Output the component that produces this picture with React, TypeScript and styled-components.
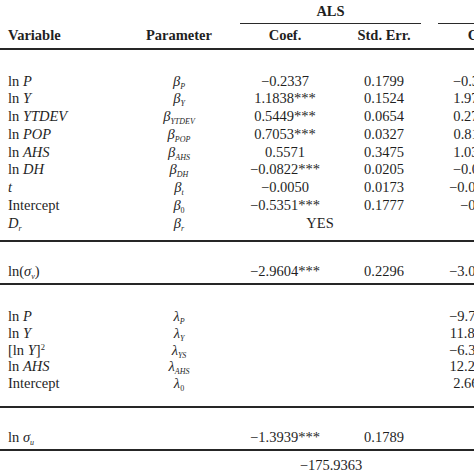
import React from 'react'
import styled, { createGlobalStyle } from 'styled-components'

const GlobalStyle = createGlobalStyle`
  html, body {
    margin: 0;
    padding: 0;
    background: #fff;
  }
  body {
    width: 474px;
    height: 474px;
    overflow: hidden;
  }
`

const Page = styled.div`
  width: 474px;
  height: 474px;
  overflow: hidden;
  background: #fff;
`

const Table = styled.table`
  width: 800px;
  table-layout: fixed;
  border-collapse: separate;
  border-spacing: 0;
  font-family: 'Liberation Serif', 'Times New Roman', serif;
  font-size: 14.5px;
  color: #1f1f1f;
  td, th {
    padding: 0;
  }
`

const GroupCell = styled.th`
  vertical-align: top;
  font-weight: 700;
`

const GroupLabel = styled.div`
  margin: 0 5px 0 12px;
  line-height: 23px;
  border-bottom: 1.5px solid #2a2a2a;
  text-align: center;
`

const HeadRow = styled.tr`
  height: 23.5px;
`

const HeadCell = styled.th<{ $left?: boolean }>`
  font-weight: 700;
  line-height: 23.5px;
  text-align: ${p => (p.$left ? 'left' : 'center')};
  padding-left: ${p => (p.$left ? '8px' : '0')} !important;
`

const Spacer = styled.tr<{ $h: number }>`
  height: ${p => p.$h}px;
  td {
    height: ${p => p.$h}px;
  }
`

const Rule = styled.tr`
  td {
    height: 2px;
    background: #262626;
  }
`

const Row = styled.tr<{ $h: number }>`
  td {
    height: ${p => p.$h}px;
    line-height: ${p => p.$h}px;
    white-space: nowrap;
  }
`

const VarCell = styled.td`
  text-align: left;
  padding-left: 8px !important;
`

const Cell = styled.td<{ $shift?: number }>`
  text-align: center;
  padding-left: ${p => (p.$shift && p.$shift > 0 ? p.$shift * 2 : 0)}px !important;
  padding-right: ${p => (p.$shift && p.$shift < 0 ? -p.$shift * 2 : 0)}px !important;
`

const Sym = styled.span`
  font-style: italic;
`

const Sub = styled.sub<{ $upright?: boolean }>`
  font-size: 8px;
  font-style: ${p => (p.$upright ? 'normal' : 'italic')};
  vertical-align: -3px;
  line-height: 0;
`

const Sup = styled.sup`
  font-size: 8.5px;
  vertical-align: 5px;
  line-height: 0;
`

const Param: React.FC<{ sym: string; sub: string; upright?: boolean }> = ({ sym, sub, upright }) => (
  <Sym>
    {sym}
    <Sub $upright={upright}>{sub}</Sub>
  </Sym>
)

const Ln: React.FC<{ v: string }> = ({ v }) => (
  <>
    ln <Sym>{v}</Sym>
  </>
)

type DataRow = {
  name: React.ReactNode
  param: React.ReactNode
  coef?: string
  se?: string
  coef2?: string
  se2?: string
  span?: string
}

const betaRows: DataRow[] = [
  { name: <Ln v="P" />, param: <Param sym="β" sub="P" />, coef: '−0.2337', se: '0.1799', coef2: '−0.3612**', se2: '0.1704' },
  { name: <Ln v="Y" />, param: <Param sym="β" sub="Y" />, coef: '1.1838***', se: '0.1524', coef2: '1.9712***', se2: '0.2213' },
  { name: <Ln v="YTDEV" />, param: <Param sym="β" sub="YTDEV" />, coef: '0.5449***', se: '0.0654', coef2: '0.2731***', se2: '0.0712' },
  { name: <Ln v="POP" />, param: <Param sym="β" sub="POP" />, coef: '0.7053***', se: '0.0327', coef2: '0.8117***', se2: '0.0401' },
  { name: <Ln v="AHS" />, param: <Param sym="β" sub="AHS" />, coef: '0.5571', se: '0.3475', coef2: '1.0325***', se2: '0.3314' },
  { name: <Ln v="DH" />, param: <Param sym="β" sub="DH" />, coef: '−0.0822***', se: '0.0205', coef2: '−0.0614**', se2: '0.0231' },
  { name: <Sym>t</Sym>, param: <Param sym="β" sub="t" />, coef: '−0.0050', se: '0.0173', coef2: '−0.0078***', se2: '0.0021' },
  { name: 'Intercept', param: <Param sym="β" sub="0" upright />, coef: '−0.5351***', se: '0.1777', coef2: '−0.5642', se2: '0.3910' },
  { name: <Sym>D<Sub>r</Sub></Sym>, param: <Param sym="β" sub="r" />, span: 'YES' },
]

const lambdaRows: DataRow[] = [
  { name: <Ln v="P" />, param: <Param sym="λ" sub="P" />, coef2: '−9.7263***', se2: '2.1104' },
  { name: <Ln v="Y" />, param: <Param sym="λ" sub="Y" />, coef2: '11.8412***', se2: '3.0021' },
  {
    name: (
      <>
        [ln <Sym>Y</Sym>]<Sup>2</Sup>
      </>
    ),
    param: <Param sym="λ" sub="YS" />,
    coef2: '−6.3125***',
    se2: '1.5532',
  },
  { name: <Ln v="AHS" />, param: <Param sym="λ" sub="AHS" />, coef2: '12.2418***', se2: '2.9041' },
  { name: 'Intercept', param: <Param sym="λ" sub="0" upright />, coef2: '2.6614***', se2: '0.6612' },
]

const Line: React.FC<{ h: number; r: DataRow }> = ({ h, r }) => (
  <Row $h={h}>
    <VarCell>{r.name}</VarCell>
    <Cell>{r.param}</Cell>
    {r.span ? (
      <Cell colSpan={2} $shift={-7}>
        {r.span}
      </Cell>
    ) : (
      <>
        <Cell>{r.coef}</Cell>
        <Cell>{r.se}</Cell>
      </>
    )}
    <Cell>{r.coef2}</Cell>
    <Cell>{r.se2}</Cell>
    <Cell />
  </Row>
)

const Gap: React.FC<{ h: number }> = ({ h }) => (
  <Spacer $h={h}>
    <td colSpan={7} />
  </Spacer>
)

const HRule: React.FC = () => (
  <Rule>
    <td colSpan={7} />
  </Rule>
)

const App: React.FC = () => {
  return (
    <Page>
      <GlobalStyle />
      <Table>
        <colgroup>
          <col style={{ width: 130 }} />
          <col style={{ width: 98 }} />
          <col style={{ width: 114 }} />
          <col style={{ width: 84 }} />
          <col style={{ width: 116 }} />
          <col style={{ width: 84 }} />
          <col style={{ width: 174 }} />
        </colgroup>
        <thead>
          <tr>
            <GroupCell />
            <GroupCell />
            <GroupCell colSpan={2}>
              <GroupLabel>ALS</GroupLabel>
            </GroupCell>
            <GroupCell colSpan={2}>
              <GroupLabel>MLE</GroupLabel>
            </GroupCell>
            <GroupCell />
          </tr>
          <HeadRow>
            <HeadCell $left>Variable</HeadCell>
            <HeadCell>Parameter</HeadCell>
            <HeadCell>Coef.</HeadCell>
            <HeadCell>Std. Err.</HeadCell>
            <HeadCell>Coef.</HeadCell>
            <HeadCell>Std. Err.</HeadCell>
            <HeadCell />
          </HeadRow>
        </thead>
        <tbody>
          <HRule />
          <Gap h={23} />
          {betaRows.map((r, i) => (
            <Line key={i} h={17.75} r={r} />
          ))}
          <Gap h={7.25} />
          <HRule />
          <Gap h={21} />
          <Line
            h={17.75}
            r={{
              name: (
                <>
                  ln(<Sym>σ</Sym>
                  <Sub>v</Sub>)
                </>
              ),
              param: null,
              coef: '−2.9604***',
              se: '0.2296',
              coef2: '−3.0412***',
              se2: '0.2511',
            }}
          />
          <Gap h={2.25} />
          <HRule />
          <Gap h={23.5} />
          {lambdaRows.map((r, i) => (
            <Line key={i} h={16.75} r={r} />
          ))}
          <Gap h={13.75} />
          <HRule />
          <Gap h={21} />
          <Line
            h={17.75}
            r={{
              name: (
                <>
                  ln <Sym>σ</Sym>
                  <Sub>u</Sub>
                </>
              ),
              param: null,
              coef: '−1.3939***',
              se: '0.1789',
            }}
          />
          <Gap h={2.25} />
          <HRule />
          <Gap h={5} />
          <Row $h={18}>
            <VarCell />
            <Cell />
            <Cell colSpan={2} $shift={4}>
              −175.9363
            </Cell>
            <Cell />
            <Cell />
            <Cell />
          </Row>
        </tbody>
      </Table>
    </Page>
  )
}

export default App
